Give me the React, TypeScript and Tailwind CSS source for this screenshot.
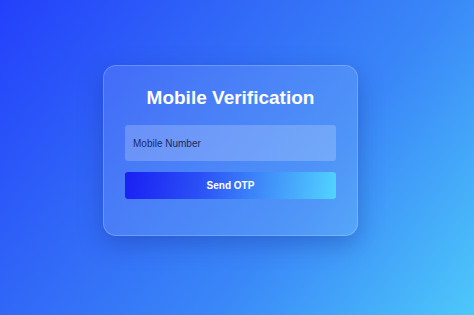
export default function App() {
  return (
    <div
      className="flex min-h-screen w-full items-center justify-center bg-[linear-gradient(127deg,#2340fb_0%,#3168f7_34%,#3a88f8_64%,#4dc8fa_100%)] pr-[13px] pb-[14px]"
      style={{ fontFamily: '"Liberation Sans", Arial, sans-serif' }}
    >
      {/* Card */}
      <div className="w-[255px] rounded-[13px] border border-white/20 bg-white/[0.11] px-[21px] pt-[20px] pb-[36px] shadow-[0_8px_24px_rgba(20,40,140,0.35)]">
        <h1 className="text-center text-[19px] leading-[24px] font-bold text-white">
          Mobile Verification
        </h1>

        <div className="mt-[15px] flex h-[36px] items-center rounded-[3px] bg-white/20 px-[8px]">
          <span className="text-[10px] text-[#1c2a5c]">Mobile Number</span>
        </div>

        <button className="mt-[11px] flex h-[27px] w-full items-center justify-center rounded-[3px] bg-[linear-gradient(100deg,#1a1ff3_0%,#2a4ff6_35%,#3f8cf9_65%,#52d4ff_100%)] text-[10px] font-bold text-white">
          Send OTP
        </button>
      </div>
    </div>
  );
}
